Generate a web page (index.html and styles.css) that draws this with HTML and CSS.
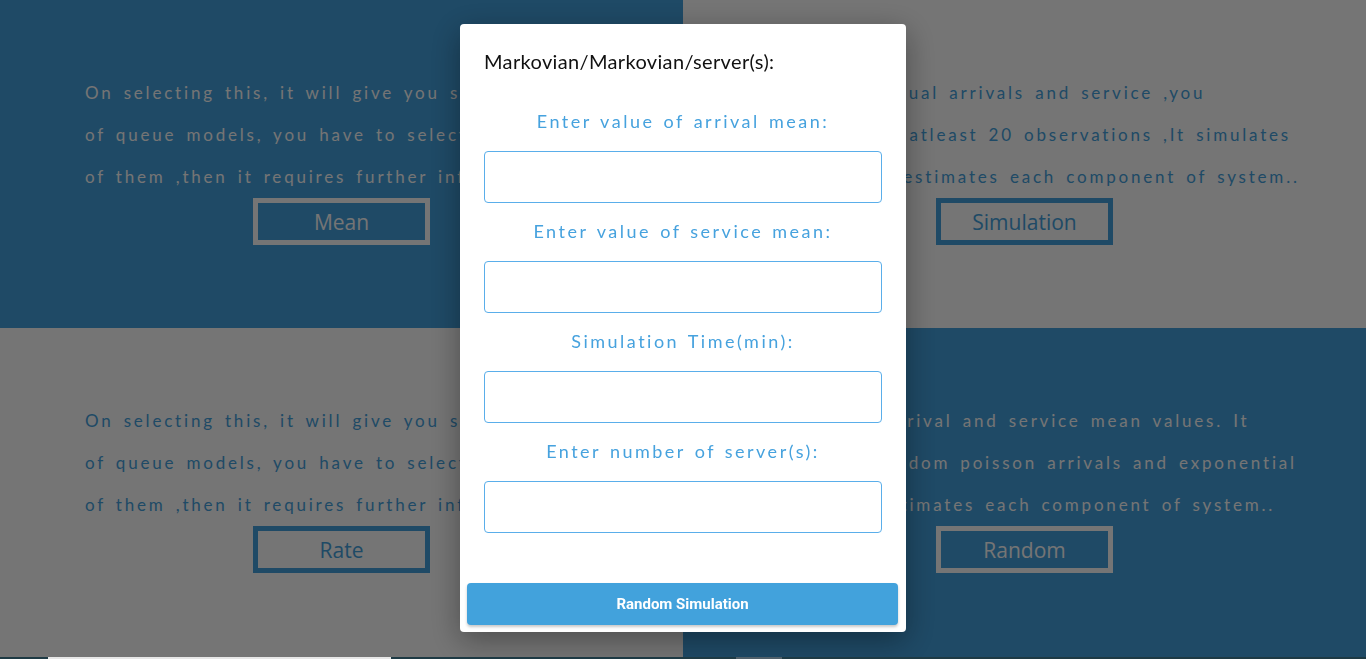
FILE: index.html
```html
<!DOCTYPE html>
<html lang="en">
<head>
<meta charset="utf-8">
<title>Queue Simulation</title>
<link rel="stylesheet" href="styles.css">
</head>
<body>
<main class="grid">
  <section class="cell cell-blue">
    <p class="desc">On selecting this, it will give you several types<br>of queue models, you have to select any one<br>of them ,then it requires further information.</p>
    <a class="cell-btn">Mean</a>
  </section>
  <section class="cell cell-gray">
    <p class="desc">If you individual arrivals and service ,you<br>need to give atleast 20 observations ,It simulates<br>systems and estimates each component of system..</p>
    <a class="cell-btn">Simulation</a>
  </section>
  <section class="cell cell-gray">
    <p class="desc">On selecting this, it will give you several types<br>of queue models, you have to select any one<br>of them ,then it requires further information.</p>
    <a class="cell-btn">Rate</a>
  </section>
  <section class="cell cell-blue">
    <p class="desc">It requires arrival and service mean values. It<br>generates random poisson arrivals and exponential<br>times and estimates each component of system..</p>
    <a class="cell-btn">Random</a>
  </section>
</main>

<div class="backdrop"></div>

<div class="modal">
  <div class="modal-body">
    <h2 class="modal-title">Markovian/Markovian/server(s):</h2>
    <label class="field-label">Enter value of arrival mean:</label>
    <input class="field-input" type="text">
    <label class="field-label">Enter value of service mean:</label>
    <input class="field-input" type="text">
    <label class="field-label">Simulation Time(min):</label>
    <input class="field-input" type="text">
    <label class="field-label">Enter number of server(s):</label>
    <input class="field-input" type="text">
  </div>
  <div class="modal-footer">
    <button class="primary-btn" type="button">Random Simulation</button>
  </div>
</div>

<div class="bottom-strip">
  <span class="strip-thumb"></span>
  <span class="strip-mark"></span>
</div>
</body>
</html>
```

FILE: styles.css
```css
html, body {
  margin: 0;
  padding: 0;
  height: 100%;
  overflow: hidden;
}

body {
  font-family: "Lato", "Noto Sans", sans-serif;
  background: #eaeaea;
}

.grid {
  display: grid;
  grid-template-columns: 683px 683px;
  grid-template-rows: 328px 331px;
}

.cell {
  display: flex;
  flex-direction: column;
  align-items: center;
  padding-top: 72px;
  box-sizing: border-box;
  overflow: hidden;
}

.cell-blue {
  background: #3e94cc;
  color: #eaeaea;
}

.cell-gray {
  background: #eaeaea;
  color: #3e94cc;
}

.desc {
  align-self: stretch;
  margin: 0;
  padding-left: 85px;
  font-family: "Lato", sans-serif;
  font-size: 17px;
  line-height: 42px;
  letter-spacing: 2.8px;
  word-spacing: 3px;
  white-space: nowrap;
}

.cell-btn {
  display: flex;
  align-items: center;
  justify-content: center;
  width: 177px;
  height: 47px;
  box-sizing: border-box;
  border: 5px solid currentColor;
  font-family: "Open Sans", sans-serif;
  font-size: 21px;
}

.backdrop {
  position: fixed;
  inset: 0;
  background: rgba(0, 0, 0, 0.5);
}

.modal {
  position: fixed;
  left: 460px;
  top: 24px;
  width: 446px;
  background: #fff;
  border-radius: 4px;
  box-shadow: 0 8px 30px rgba(0, 0, 0, 0.35);
}

.modal-body {
  display: flex;
  flex-direction: column;
  padding: 24px 24px 50px;
}

.modal-title {
  margin: 0 0 18px;
  font-family: "Lato", sans-serif;
  font-weight: 400;
  font-size: 20px;
  line-height: 27px;
  color: #111;
  letter-spacing: 0.35px;
}

.field-label {
  display: block;
  padding: 13px 0 15px;
  line-height: 30px;
  text-align: center;
  font-family: "Lato", sans-serif;
  font-size: 18px;
  letter-spacing: 2.5px;
  word-spacing: 2px;
  color: #46a2de;
}

.field-input {
  display: block;
  width: 100%;
  height: 52px;
  box-sizing: border-box;
  border: 1px solid #5aaeea;
  border-radius: 4px;
  padding: 0 12px;
  font-size: 16px;
  outline: none;
}

.modal-footer {
  padding: 0 8px 7px 7px;
}

.primary-btn {
  display: block;
  width: 100%;
  height: 42px;
  border: none;
  border-radius: 4px;
  background: #42a2dc;
  color: #fff;
  font-family: "Roboto", sans-serif;
  font-weight: 700;
  font-size: 15px;
  letter-spacing: 0;
  box-shadow: 0 2px 3px rgba(0, 0, 0, 0.22);
}

.bottom-strip {
  position: fixed;
  left: 0;
  right: 0;
  bottom: 0;
  height: 2px;
  background: #1e3a44;
}

.strip-thumb {
  position: absolute;
  left: 48px;
  width: 343px;
  top: 0;
  bottom: 0;
  background: #e6e6e6;
}

.strip-mark {
  position: absolute;
  left: 736px;
  width: 46px;
  top: 0;
  bottom: 0;
  background: #50606a;
}
```
